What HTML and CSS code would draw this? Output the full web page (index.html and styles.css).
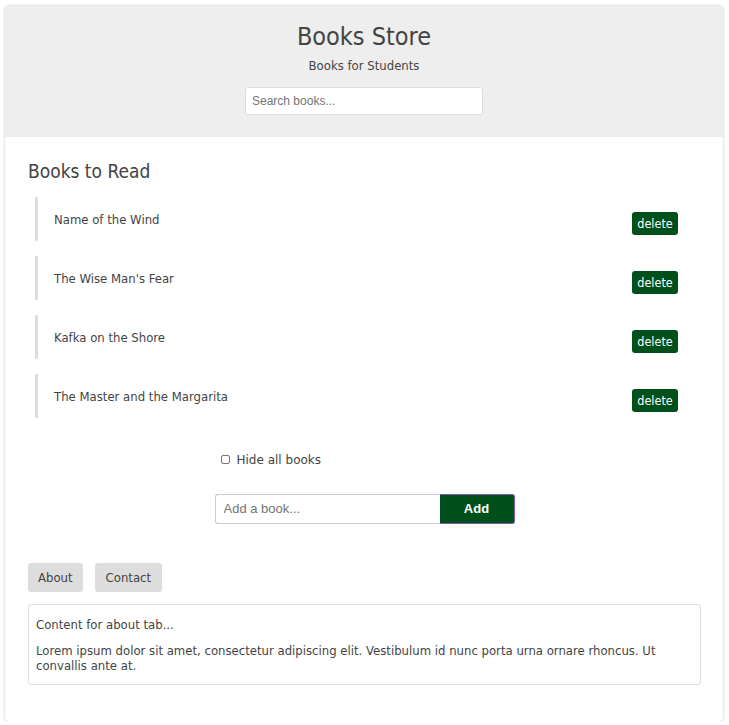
FILE: index.html
```html
<!DOCTYPE html>
<html lang="en">
<head>
<meta charset="utf-8">
<title>Books Store</title>
<link rel="stylesheet" href="styles.css">
</head>
<body>
<div class="card">
  <header class="header">
    <h1 class="title">Books Store</h1>
    <p class="subtitle">Books for Students</p>
    <input class="search" type="text" placeholder="Search books...">
  </header>
  <main class="main">
    <h2 class="list-title">Books to Read</h2>
    <ul class="book-list">
      <li class="book"><span class="book-name">Name of the Wind</span><button class="delete">delete</button></li>
      <li class="book"><span class="book-name">The Wise Man's Fear</span><button class="delete">delete</button></li>
      <li class="book"><span class="book-name">Kafka on the Shore</span><button class="delete">delete</button></li>
      <li class="book"><span class="book-name">The Master and the Margarita</span><button class="delete">delete</button></li>
    </ul>
    <div class="hide-row">
      <label class="hide-label"><input class="check" type="checkbox"><span>Hide all books</span></label>
    </div>
    <form class="add-form">
      <input class="add-input" type="text" placeholder="Add a book...">
      <button class="add-btn" type="button">Add</button>
    </form>
    <div class="tabs">
      <button class="tab">About</button>
      <button class="tab">Contact</button>
    </div>
    <div class="panel">
      <p class="panel-p">Content for about tab...</p>
      <p class="panel-p">Lorem ipsum dolor sit amet, consectetur adipiscing elit. Vestibulum id nunc porta urna ornare rhoncus. Ut convallis ante at.</p>
    </div>
  </main>
</div>
</body>
</html>
```

FILE: styles.css
```css
html, body {
  margin: 0;
  padding: 0;
  background: #fff;
}
body {
  padding: 6px 6px 0 5px;
  font-family: "DejaVu Sans Condensed", "DejaVu Sans", sans-serif;
  color: #444;
}
.card {
  border-radius: 4px;
  box-shadow: 0 0 3px rgba(0,0,0,0.25);
  overflow: hidden;
  background: #fff;
  height: 715px;
  box-sizing: border-box;
}
.header {
  background: #eee;
  text-align: center;
  padding: 16px 0 22px;
}
.title {
  margin: 0;
  font-size: 25px;
  line-height: 30px;
  font-weight: normal;
  color: #444;
}
.subtitle {
  margin: 6px 0 0;
  font-size: 13px;
  line-height: 16px;
}
.search {
  display: block;
  margin: 13px auto 0;
  width: 238px;
  height: 28px;
  box-sizing: border-box;
  border: 1px solid #ddd;
  border-radius: 3px;
  padding: 0 6px;
  font-family: "Liberation Sans", Arial, sans-serif;
  font-size: 12px;
  color: #444;
  outline: none;
}
.search::placeholder, .add-input::placeholder {
  color: #757575;
}
.main {
  padding: 23px 22px 0 23px;
}
.list-title {
  margin: 0;
  font-size: 19px;
  line-height: 22px;
  font-weight: normal;
  color: #444;
}
.book-list {
  list-style: none;
  margin: 15px 0 0;
  padding: 0 0 0 7px;
}
.book {
  display: flex;
  justify-content: space-between;
  align-items: flex-start;
  height: 44px;
  box-sizing: border-box;
  border-left: 3px solid #ddd;
  padding: 15px 23px 0 16px;
  margin-bottom: 15px;
}
.book:last-child {
  margin-bottom: 0;
}
.book-name {
  font-size: 13px;
  line-height: 16px;
  color: #444;
}
.delete {
  margin-top: 0;
  height: 23px;
  border: none;
  border-radius: 3px;
  background: #00501c;
  color: #fff;
  font-family: "DejaVu Sans Condensed", "DejaVu Sans", sans-serif;
  font-size: 12.5px;
  padding: 0 5px;
  width: 46px;
  cursor: pointer;
}
.hide-row {
  width: 300px;
  margin: 31px auto 0;
  padding-left: 6px;
  box-sizing: border-box;
}
.hide-label {
  display: inline-flex;
  align-items: center;
  font-family: "DejaVu Sans", sans-serif;
  font-size: 12px;
  line-height: 18px;
  color: #444;
}
.check {
  appearance: none;
  -webkit-appearance: none;
  width: 9px;
  height: 9px;
  margin: 0 7px 0 0;
  border: 1px solid #767676;
  border-radius: 2px;
  background: #fff;
  box-sizing: border-box;
}
.add-form {
  display: flex;
  width: 300px;
  margin: 25px auto 0;
  height: 30px;
}
.add-input {
  flex: 0 0 225px;
  box-sizing: border-box;
  border: 1px solid #ccc;
  border-right: none;
  border-radius: 3px 0 0 3px;
  padding: 0 8px;
  font-family: "Liberation Sans", Arial, sans-serif;
  font-size: 13px;
  color: #444;
  outline: none;
}
.add-btn {
  flex: 0 0 75px;
  box-sizing: border-box;
  border: 1px solid #7d5ba6;
  border-left: none;
  border-radius: 0 3px 3px 0;
  background: #00501c;
  color: #fff;
  font-family: "Liberation Sans", Arial, sans-serif;
  font-weight: bold;
  font-size: 13px;
  cursor: pointer;
}
.tabs {
  display: flex;
  gap: 12px;
  margin-top: 39px;
}
.tab {
  height: 29px;
  padding: 0 10px;
  border: none;
  border-radius: 3px;
  background: #ddd;
  color: #444;
  font-family: "DejaVu Sans Condensed", "DejaVu Sans", sans-serif;
  font-size: 13px;
  cursor: pointer;
}
.tab + .tab {
  padding: 0 11px;
}
.panel {
  margin-top: 12px;
  border: 1px solid #ddd;
  border-radius: 3px;
  padding: 12px 7px 11px;
}
.panel-p {
  margin: 0 0 11px;
  font-size: 13px;
  line-height: 15px;
  color: #444;
}
.panel-p:last-child {
  margin-bottom: 0;
}
```
